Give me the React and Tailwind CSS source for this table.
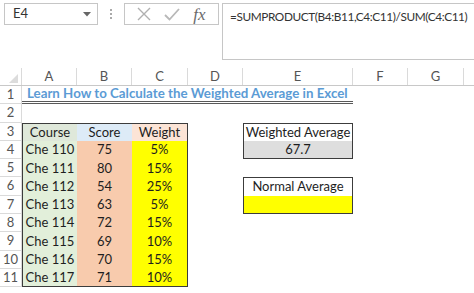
// Excel sheet — weighted average example
const COLS = ['A', 'B', 'C', 'D', 'E', 'F', 'G'];
const W = ['w-[55px]', 'w-[55px]', 'w-[56px]', 'w-[55px]', 'w-[110px]', 'w-[55px]', 'w-[56px]'];

const data = [
  ['Che 110', 75, '5%'],
  ['Che 111', 80, '15%'],
  ['Che 112', 54, '25%'],
  ['Che 113', 63, '5%'],
  ['Che 114', 72, '15%'],
  ['Che 115', 69, '10%'],
  ['Che 116', 70, '15%'],
  ['Che 117', 71, '10%'],
];

const RowHead = ({ n }) => (
  <div className="w-[22px] shrink-0 h-full flex items-center justify-center border-b border-r border-[#dadada] text-[13px] text-[#555]">
    {n}
  </div>
);

const Cell = ({ w, className = '', children }) => (
  <div className={`${w} shrink-0 h-full flex items-center justify-center whitespace-nowrap text-[13px] text-[#1e1e1e] ${className}`}>
    {children}
  </div>
);

export default function App() {
  return (
    <div className="w-[474px] h-[293px] overflow-hidden bg-white" style={{ fontFamily: 'Lato, "Open Sans", sans-serif' }}>
      {/* Formula bar area */}
      <div className="flex items-start h-[68px] pt-[3px]">
        <div className="shrink-0 ml-[4px] w-[94px] h-[22px] border border-[#c6c6c6] flex items-center justify-between pl-[8px] pr-[6px] text-[13px] text-[#333]">
          <span>E4</span>
          <svg width="8" height="5" viewBox="0 0 8 5"><path d="M0 0h8L4 4.5z" fill="#666" /></svg>
        </div>
        <div className="shrink-0 w-[26px] h-[22px] flex flex-col items-center justify-center gap-[2px]">
          <span className="w-[2px] h-[2px] bg-[#aaa]" />
          <span className="w-[2px] h-[2px] bg-[#aaa]" />
          <span className="w-[2px] h-[2px] bg-[#aaa]" />
        </div>
        <div className="shrink-0 w-[95px] h-[22px] border border-[#c6c6c6] flex items-center justify-around px-[6px]">
          <svg width="14" height="14" viewBox="0 0 14 14"><path d="M1 1l12 12M13 1L1 13" stroke="#b0b0b0" strokeWidth="1.4" /></svg>
          <svg width="16" height="14" viewBox="0 0 16 14"><path d="M1 8l4.5 4.5L15 2" stroke="#b8b8b8" strokeWidth="1.8" fill="none" /></svg>
          <span className="text-[17px] italic text-[#6a6a6a] leading-none" style={{ fontFamily: '"Liberation Serif", serif' }}>fx</span>
        </div>
        <div className="ml-[3px] flex-1 min-w-0 h-[57px] overflow-hidden whitespace-nowrap border-l border-t border-b border-[#c6c6c6] pl-[7px] pt-[4px] text-[11.8px] tracking-[-0.4px] text-[#333]">
          =SUMPRODUCT(B4:B11,C4:C11)/SUM(C4:C11)
        </div>
      </div>

      {/* Column headers */}
      <div className="flex h-[18px] border-b border-[#c8c8c8]">
        <div className="w-[22px] shrink-0 relative border-r border-[#dadada]">
          <svg className="absolute right-[3px] bottom-[2px]" width="9" height="9" viewBox="0 0 9 9"><path d="M9 0v9H0z" fill="#dcdcdc" /></svg>
        </div>
        {COLS.map((c, i) => (
          <div key={c} className={`${W[i]} shrink-0 flex items-center justify-center border-r border-[#dadada] text-[13px] text-[#555]`}>{c}</div>
        ))}
        <div className="flex-1" />
      </div>

      {/* Row 1 */}
      <div className="flex h-[18.3px]">
        <RowHead n={1} />
        <div className="w-[331px] shrink-0 h-full flex items-center pl-[5px] border-b-[3px] border-double border-[#595959] text-[13.3px] font-bold text-[#5b9bd5] whitespace-nowrap">
          Learn How to Calculate the Weighted Average in Excel
        </div>
      </div>

      {/* Row 2 */}
      <div className="flex h-[18.3px]"><RowHead n={2} /></div>

      {/* Row 3 */}
      <div className="flex h-[18.3px]">
        <RowHead n={3} />
        <Cell w={W[0]} className="bg-[#dfe8da] border-t border-l border-[#3c3c3c]">Course</Cell>
        <Cell w={W[1]} className="bg-[#ddebf7] border-t border-[#3c3c3c]">Score</Cell>
        <Cell w={W[2]} className="bg-[#fce4d6] border-t border-r border-[#3c3c3c]">Weight</Cell>
        <Cell w={W[3]} />
        <Cell w={W[4]} className="bg-white border-t border-l border-r border-[#3c3c3c]">Weighted Average</Cell>
      </div>

      {data.map(([course, score, weight], i) => {
        const n = i + 4;
        const last = i === data.length - 1;
        return (
          <div key={n} className="flex h-[18.3px]">
            <RowHead n={n} />
            <Cell w={W[0]} className={`bg-[#e2efda] border-l border-[#3c3c3c] ${last ? 'border-b' : ''}`}>{course}</Cell>
            <Cell w={W[1]} className={`bg-[#f8cbad] border-[#3c3c3c] ${last ? 'border-b' : ''}`}>{score}</Cell>
            <Cell w={W[2]} className={`bg-[#ffff00] border-r border-[#3c3c3c] ${last ? 'border-b' : ''}`}>{weight}</Cell>
            <Cell w={W[3]} />
            {n === 4 && <Cell w={W[4]} className="bg-[#dedede] border-l border-r border-b border-[#3c3c3c]">67.7</Cell>}
            {n === 6 && <Cell w={W[4]} className="bg-white border-t border-l border-r border-[#3c3c3c]">Normal Average</Cell>}
            {n === 7 && <Cell w={W[4]} className="bg-[#ffff00] border-l border-r border-b border-[#3c3c3c]" />}
          </div>
        );
      })}
    </div>
  );
}
